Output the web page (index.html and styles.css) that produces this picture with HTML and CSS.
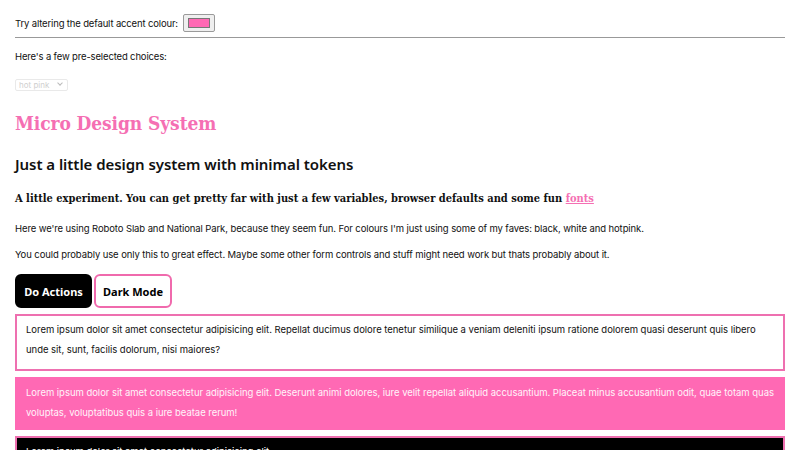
FILE: index.html
```html
<!DOCTYPE html>
<html lang="en">
<head>
<meta charset="utf-8">
<title>Micro Design System</title>
<link rel="stylesheet" href="styles.css">
</head>
<body>
<div class="accent-row">
  <label for="accent">Try altering the default accent colour:</label>
  <span class="color-input" id="accent"><span class="swatch"></span></span>
</div>
<hr class="rule">
<p class="choices">Here's a few pre-selected choices:</p>
<div class="select-wrap">
  <span class="select-box">
    <select class="preset" disabled>
      <option>hot pink</option>
    </select>
  </span>
</div>
<h1 class="title">Micro Design System</h1>
<h2 class="subtitle">Just a little design system with minimal tokens</h2>
<h3 class="lead">A little experiment. You can get pretty far with just a few variables, browser defaults and some fun <a href="#">fonts</a></h3>
<p class="copy first">Here we're using Roboto Slab and National Park, because they seem fun. For colours I'm just using some of my faves: black, white and hotpink.</p>
<p class="copy second">You could probably use only this to great effect. Maybe some other form controls and stuff might need work but thats probably about it.</p>
<div class="buttons">
  <button class="btn btn-primary">Do Actions</button>
  <button class="btn btn-outline">Dark Mode</button>
</div>
<div class="box box-light">Lorem ipsum dolor sit amet consectetur adipisicing elit. Repellat ducimus dolore tenetur similique a veniam deleniti ipsum ratione dolorem quasi deserunt quis libero unde sit, sunt, facilis dolorum, nisi maiores?</div>
<div class="box box-pink">Lorem ipsum dolor sit amet consectetur adipisicing elit. Deserunt animi dolores, iure velit repellat aliquid accusantium. Placeat minus accusantium odit, quae totam quas voluptas, voluptatibus quis a iure beatae rerum!</div>
<div class="box box-dark">Lorem ipsum dolor sit amet consectetur adipisicing elit.</div>
</body>
</html>
```
FILE: styles.css
```css
html, body {
  margin: 0;
  padding: 0;
  background: #fff;
}
body {
  padding: 0 15px;
  font-family: "Inter", "Liberation Sans", sans-serif;
  font-size: 9.5px;
  letter-spacing: -0.1px;
  color: #111;
}
.accent-row {
  margin-top: 14px;
  height: 18px;
  display: flex;
  align-items: center;
  gap: 5px;
  letter-spacing: -0.15px;
}
.color-input {
  box-sizing: border-box;
  width: 32px;
  height: 18px;
  border: 1px solid #9a9a9a;
  border-radius: 2px;
  background: #efefef;
  padding: 3px 4px;
  display: flex;
}
.swatch {
  flex: 1;
  background: #ff69b4;
  border: 1px solid #777;
}
.rule {
  margin: 5px 0 0;
  border: 0;
  border-top: 1px solid #999;
  height: 0;
}
.choices {
  margin: 12px 0 0;
  line-height: 13px;
  letter-spacing: -0.15px;
}
.select-wrap {
  margin-top: 16px;
  height: 12px;
  display: flex;
}
.select-box {
  position: relative;
  display: inline-block;
}
.select-box::after {
  content: "";
  position: absolute;
  right: 6px;
  top: 2px;
  width: 3px;
  height: 3px;
  border-right: 1px solid #bbb;
  border-bottom: 1px solid #bbb;
  transform: rotate(45deg);
  pointer-events: none;
}
.preset {
  -webkit-appearance: none;
  appearance: none;
  box-sizing: border-box;
  width: 53px;
  height: 12px;
  font-family: "Inter", "Liberation Sans", sans-serif;
  font-size: 8px;
  line-height: 10px;
  padding: 0 0 0 3px;
  margin: 0;
  color: #bbb;
  border: 1px solid #e0e0e0;
  border-radius: 2px;
  background: #fff;
}
.title {
  margin: 20px 0 0;
  font-family: "DejaVu Serif", serif;
  font-stretch: condensed;
  font-weight: 600;
  font-size: 19px;
  line-height: 24px;
  color: #f56fb3;
  letter-spacing: -0.1px;
}
.subtitle {
  margin: 19px 0 0;
  font-family: "Noto Sans", sans-serif;
  font-weight: 600;
  font-size: 15px;
  line-height: 20px;
  letter-spacing: -0.05px;
}
.lead {
  margin: 17px 0 0;
  font-family: "DejaVu Serif", serif;
  font-stretch: condensed;
  font-weight: 700;
  font-size: 11px;
  line-height: 16px;
  letter-spacing: 0;
}
.lead a {
  color: #f56fb3;
}
.copy {
  margin: 0;
  line-height: 14px;
}
.copy.first { margin-top: 15px; }
.copy.second { margin-top: 12px; }
.buttons {
  margin-top: 12px;
  display: flex;
  gap: 2px;
}
.btn {
  box-sizing: border-box;
  height: 34px;
  padding: 0;
  white-space: nowrap;
  border-radius: 6px;
  font-family: "Noto Sans", sans-serif;
  font-weight: 700;
  font-size: 11px;
  letter-spacing: 0;
  cursor: pointer;
}
.btn-primary {
  width: 77px;
  background: #000;
  color: #fff;
  border: 2px solid #000;
}
.btn-outline {
  width: 78px;
  background: #fff;
  color: #000;
  border: 2px solid #f06aad;
}
.box {
  border: 2px solid #ee70b0;
  padding: 4px 7px 9px 9px;
  line-height: 20px;
  letter-spacing: -0.03px;
}
.box-light {
  margin-top: 6px;
  background: #fff;
  color: #111;
}
.box-pink {
  margin-top: 6px;
  background: #ff69b4;
  border-color: #ff69b4;
  color: #fff4fa;
  padding-bottom: 5px;
}
.box-dark {
  margin-top: 6px;
  background: #000;
  color: #fff;
  padding-bottom: 40px;
}
```
